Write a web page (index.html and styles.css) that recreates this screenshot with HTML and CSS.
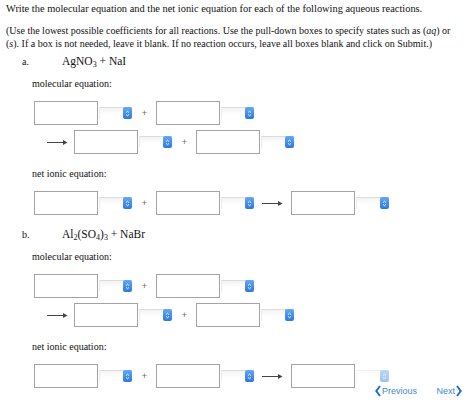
FILE: index.html
```html
<!DOCTYPE html>
<html>
<head>
<meta charset="utf-8">
<link rel="stylesheet" href="styles.css">
</head>
<body>
<div class="page">
  <p class="q">Write the molecular equation and the net ionic equation for each of the following aqueous reactions.</p>
  <p class="instr">(Use the lowest possible coefficients for all reactions. Use the pull-down boxes to specify states such as (<i>aq</i>) or (<i>s</i>). If a box is not needed, leave it blank. If no reaction occurs, leave all boxes blank and click on Submit.)</p>

  <div class="part">
    <div class="part-head"><span class="letter">a.</span><span class="formula">AgNO<sub>3</sub> + NaI</span></div>
    <div class="eq-label">molecular equation:</div>
    <div class="eq-row">
      <span class="field"><span class="box"></span><span class="sel"><span class="btn"><svg width="5" height="7" viewBox="0 0 5 7"><path d="M1 2.6 L2.5 1.2 L4 2.6 M1 4.4 L2.5 5.8 L4 4.4" fill="none" stroke="#fff" stroke-width="0.9"/></svg></span></span></span>
      <span class="plus">+</span>
      <span class="field"><span class="box"></span><span class="sel"><span class="btn"><svg width="5" height="7" viewBox="0 0 5 7"><path d="M1 2.6 L2.5 1.2 L4 2.6 M1 4.4 L2.5 5.8 L4 4.4" fill="none" stroke="#fff" stroke-width="0.9"/></svg></span></span></span>
    </div>
    <div class="eq-row second">
      <span class="arrow lead"><svg width="21" height="7" viewBox="0 0 21 7"><path d="M0 3.5 H19" stroke="#444" stroke-width="1"/><path d="M16 1 L20.5 3.5 L16 6 Z" fill="#444"/></svg></span>
      <span class="field"><span class="box"></span><span class="sel"><span class="btn"><svg width="5" height="7" viewBox="0 0 5 7"><path d="M1 2.6 L2.5 1.2 L4 2.6 M1 4.4 L2.5 5.8 L4 4.4" fill="none" stroke="#fff" stroke-width="0.9"/></svg></span></span></span>
      <span class="plus">+</span>
      <span class="field"><span class="box"></span><span class="sel"><span class="btn"><svg width="5" height="7" viewBox="0 0 5 7"><path d="M1 2.6 L2.5 1.2 L4 2.6 M1 4.4 L2.5 5.8 L4 4.4" fill="none" stroke="#fff" stroke-width="0.9"/></svg></span></span></span>
    </div>
    <div class="eq-label net">net ionic equation:</div>
    <div class="eq-row">
      <span class="field"><span class="box"></span><span class="sel"><span class="btn"><svg width="5" height="7" viewBox="0 0 5 7"><path d="M1 2.6 L2.5 1.2 L4 2.6 M1 4.4 L2.5 5.8 L4 4.4" fill="none" stroke="#fff" stroke-width="0.9"/></svg></span></span></span>
      <span class="plus">+</span>
      <span class="field"><span class="box"></span><span class="sel"><span class="btn"><svg width="5" height="7" viewBox="0 0 5 7"><path d="M1 2.6 L2.5 1.2 L4 2.6 M1 4.4 L2.5 5.8 L4 4.4" fill="none" stroke="#fff" stroke-width="0.9"/></svg></span></span></span>
      <span class="arrow"><svg width="21" height="7" viewBox="0 0 21 7"><path d="M0 3.5 H19" stroke="#444" stroke-width="1"/><path d="M16 1 L20.5 3.5 L16 6 Z" fill="#444"/></svg></span>
      <span class="field"><span class="box"></span><span class="sel"><span class="btn"><svg width="5" height="7" viewBox="0 0 5 7"><path d="M1 2.6 L2.5 1.2 L4 2.6 M1 4.4 L2.5 5.8 L4 4.4" fill="none" stroke="#fff" stroke-width="0.9"/></svg></span></span></span>
    </div>
  </div>

  <div class="part">
    <div class="part-head"><span class="letter">b.</span><span class="formula">Al<sub>2</sub>(SO<sub>4</sub>)<sub>3</sub> + NaBr</span></div>
    <div class="eq-label">molecular equation:</div>
    <div class="eq-row">
      <span class="field"><span class="box"></span><span class="sel"><span class="btn"><svg width="5" height="7" viewBox="0 0 5 7"><path d="M1 2.6 L2.5 1.2 L4 2.6 M1 4.4 L2.5 5.8 L4 4.4" fill="none" stroke="#fff" stroke-width="0.9"/></svg></span></span></span>
      <span class="plus">+</span>
      <span class="field"><span class="box"></span><span class="sel"><span class="btn"><svg width="5" height="7" viewBox="0 0 5 7"><path d="M1 2.6 L2.5 1.2 L4 2.6 M1 4.4 L2.5 5.8 L4 4.4" fill="none" stroke="#fff" stroke-width="0.9"/></svg></span></span></span>
    </div>
    <div class="eq-row second">
      <span class="arrow lead"><svg width="21" height="7" viewBox="0 0 21 7"><path d="M0 3.5 H19" stroke="#444" stroke-width="1"/><path d="M16 1 L20.5 3.5 L16 6 Z" fill="#444"/></svg></span>
      <span class="field"><span class="box"></span><span class="sel"><span class="btn"><svg width="5" height="7" viewBox="0 0 5 7"><path d="M1 2.6 L2.5 1.2 L4 2.6 M1 4.4 L2.5 5.8 L4 4.4" fill="none" stroke="#fff" stroke-width="0.9"/></svg></span></span></span>
      <span class="plus">+</span>
      <span class="field"><span class="box"></span><span class="sel"><span class="btn"><svg width="5" height="7" viewBox="0 0 5 7"><path d="M1 2.6 L2.5 1.2 L4 2.6 M1 4.4 L2.5 5.8 L4 4.4" fill="none" stroke="#fff" stroke-width="0.9"/></svg></span></span></span>
    </div>
    <div class="eq-label net">net ionic equation:</div>
    <div class="eq-row">
      <span class="field"><span class="box"></span><span class="sel"><span class="btn"><svg width="5" height="7" viewBox="0 0 5 7"><path d="M1 2.6 L2.5 1.2 L4 2.6 M1 4.4 L2.5 5.8 L4 4.4" fill="none" stroke="#fff" stroke-width="0.9"/></svg></span></span></span>
      <span class="plus">+</span>
      <span class="field"><span class="box"></span><span class="sel"><span class="btn"><svg width="5" height="7" viewBox="0 0 5 7"><path d="M1 2.6 L2.5 1.2 L4 2.6 M1 4.4 L2.5 5.8 L4 4.4" fill="none" stroke="#fff" stroke-width="0.9"/></svg></span></span></span>
      <span class="arrow"><svg width="21" height="7" viewBox="0 0 21 7"><path d="M0 3.5 H19" stroke="#444" stroke-width="1"/><path d="M16 1 L20.5 3.5 L16 6 Z" fill="#444"/></svg></span>
      <span class="field"><span class="box"></span><span class="sel"><span class="btn"><svg width="5" height="7" viewBox="0 0 5 7"><path d="M1 2.6 L2.5 1.2 L4 2.6 M1 4.4 L2.5 5.8 L4 4.4" fill="none" stroke="#fff" stroke-width="0.9"/></svg></span></span></span>
    </div>
  </div>

  <nav class="nav">
    <a class="nav-link prev"><svg width="6" height="12" viewBox="0 0 6 12"><path d="M5 1 L1.3 6 L5 11" fill="none" stroke="#1f6fc4" stroke-width="2"/></svg>Previous</a>
    <a class="nav-link next">Next<svg width="6" height="12" viewBox="0 0 6 12"><path d="M1 1 L4.7 6 L1 11" fill="none" stroke="#1f6fc4" stroke-width="2"/></svg></a>
  </nav>
</div>
</body>
</html>
```

FILE: styles.css
```css
html, body {
  margin: 0;
  padding: 0;
  background: #fff;
}

.page {
  position: relative;
  width: 474px;
  height: 408px;
  overflow: hidden;
  padding: 2px 6px 0 6px;
  box-sizing: border-box;
  font-family: "Liberation Serif", "Times New Roman", serif;
  font-size: 10px;
  color: #111;
}

.q {
  margin: 0;
  font-size: 10.4px;
  line-height: 13px;
}

.instr {
  width: 452px;
  margin: 9px 0 0 0;
  line-height: 13px;
}

.part-head {
  display: flex;
  align-items: baseline;
  height: 14px;
  line-height: 14px;
  margin-top: 4px;
  padding-left: 16px;
}

.part + .part .part-head {
  margin-top: 12px;
}

.letter {
  width: 40px;
  font-size: 10px;
}

.formula {
  font-size: 11.5px;
}

.formula sub {
  font-size: 8px;
  vertical-align: -2px;
  line-height: 0;
}

.eq-label {
  margin-top: 9px;
  padding-left: 26px;
  line-height: 14px;
}

.eq-label.net {
  margin-top: 13px;
}

.eq-row {
  display: flex;
  align-items: center;
  margin-top: 10px;
  padding-left: 28px;
  height: 24px;
}

.eq-row.second {
  margin-top: 5px;
}

.field {
  display: flex;
  align-items: center;
}

.box {
  width: 64px;
  height: 24px;
  box-sizing: border-box;
  border: 1px solid #a3a3a3;
  background: #fff;
}

.sel {
  display: flex;
  justify-content: flex-end;
  width: 33px;
  height: 12px;
  box-sizing: border-box;
  margin-left: 1px;
  border-top: 1px solid #dcdcdc;
  border-left: 1px solid #ececec;
  background: linear-gradient(#f3f3f3, #ffffff 60%);
}

.btn {
  display: flex;
  align-items: center;
  justify-content: center;
  width: 9px;
  height: 12px;
  margin-top: -1px;
  border-radius: 2px;
  background: linear-gradient(#64a8f4, #2a78e4);
}

.plus {
  width: 7px;
  margin: 0 8px 0 9px;
  text-align: center;
  font-family: "Liberation Sans", Arial, sans-serif;
  font-size: 9px;
  color: #666;
}

.arrow {
  display: flex;
  align-items: center;
  width: 21px;
  margin: 0 8px;
}

.arrow.lead {
  margin: 0 6px 0 13px;
}

.nav {
  position: absolute;
  right: 0;
  bottom: 0;
  width: 118px;
  height: 42px;
  display: flex;
  align-items: flex-end;
  justify-content: space-between;
  padding: 0 12px 11px 19px;
  box-sizing: border-box;
  background: rgba(255, 255, 255, 0.55);
  font-family: "Liberation Sans", Arial, sans-serif;
  font-size: 9px;
}

.nav-link {
  display: flex;
  align-items: center;
  gap: 1px;
  color: #3a8ad6;
  line-height: 12px;
}
```
